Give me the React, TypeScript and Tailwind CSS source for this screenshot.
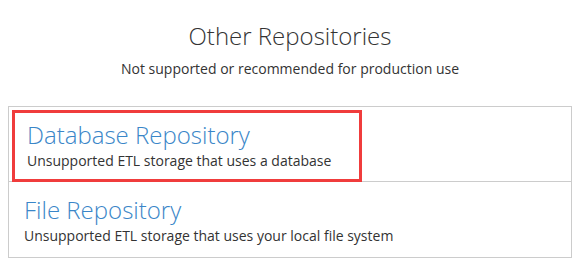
export default function App() {
  return (
    <div className="w-[580px] h-[276px] bg-white" style={{ fontFamily: '"Open Sans", sans-serif' }}>
      <div className="pt-[20px] text-center">
        <div className="text-[24px] font-light leading-[32px] text-[#333]">Other Repositories</div>
        <div className="mt-[7px] text-[14px] leading-[20px] text-[#333]">Not supported or recommended for production use</div>
      </div>
      <div className="mx-2 mt-[27px] border border-[#cccccc]">
        <div className="h-[75px] border-b border-[#cccccc] pl-[3px] pt-[3px]">
          <div className="w-[350px] h-[72px] border-[3px] border-[#f03c3c] pl-[12px] pt-[7px]">
            <div className="text-[24px] font-light leading-[30px] text-[#3a86c8]">Database Repository</div>
            <div className="mt-[1px] text-[14px] leading-[20px] text-[#333]">Unsupported ETL storage that uses a database</div>
          </div>
        </div>
        <div className="h-[75px] pl-[15px] pt-[13px]">
          <div className="text-[24px] font-light leading-[30px] text-[#3a86c8]">File Repository</div>
          <div className="mt-[1px] text-[14px] leading-[20px] text-[#333]">Unsupported ETL storage that uses your local file system</div>
        </div>
      </div>
    </div>
  );
}
